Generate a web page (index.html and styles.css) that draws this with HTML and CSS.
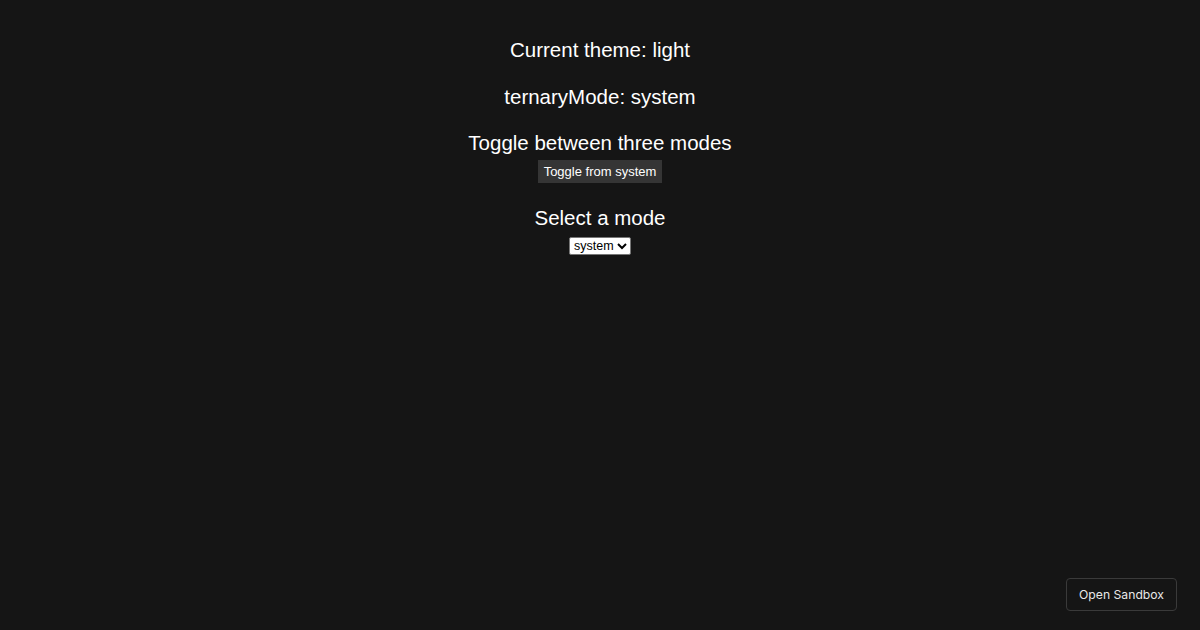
FILE: index.html
```html
<!DOCTYPE html>
<html>
<head>
<meta charset="utf-8">
<link rel="stylesheet" href="styles.css">
</head>
<body>
<main class="app">
  <h2 class="title first">Current theme: light</h2>
  <h2 class="title">ternaryMode: system</h2>
  <section class="group">
    <h2 class="title">Toggle between three modes</h2>
    <button class="toggle">Toggle from system</button>
  </section>
  <section class="group select-group">
    <h2 class="title">Select a mode</h2>
    <select class="mode">
      <option>system</option>
      <option>light</option>
      <option>dark</option>
    </select>
  </section>
</main>
<button class="sandbox">Open Sandbox</button>
</body>
</html>
```
FILE: styles.css
```css
html, body {
  margin: 0;
  height: 100%;
}
body {
  background: #151515;
  color: #ffffff;
  font-family: "Liberation Sans", Arial, sans-serif;
}
.app {
  display: flex;
  flex-direction: column;
  align-items: center;
  gap: 23px;
  padding-top: 38px;
}
.title {
  margin: 0;
  font-size: 20.5px;
  font-weight: normal;
  line-height: 23px;
}
.title.first {
  margin-bottom: 1px;
}
.group {
  display: flex;
  flex-direction: column;
  align-items: center;
}
.toggle {
  margin-top: 6px;
  height: 23px;
  padding: 0 6px;
  border: none;
  background: #353535;
  color: #ffffff;
  font-family: "Liberation Sans", Arial, sans-serif;
  font-size: 13px;
}
.select-group .mode {
  margin-top: 8px;
  height: 18px;
  font-family: "Liberation Sans", Arial, sans-serif;
  font-size: 12.5px;
  background: #ffffff;
  color: #000;
  border: 1px solid #767676;
  border-radius: 2px;
  padding: 0;
}
.sandbox {
  position: fixed;
  right: 23px;
  bottom: 19px;
  height: 33px;
  padding: 0 12px;
  background: #151515;
  color: #e8e8e8;
  border: 1px solid #3a3a3a;
  border-radius: 4px;
  font-family: Inter, "Liberation Sans", sans-serif;
  font-size: 12.2px;
}
```
